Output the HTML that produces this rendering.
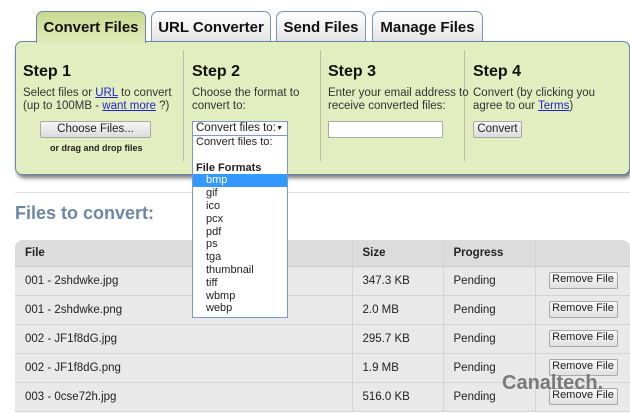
<!DOCTYPE html>
<html><head><style>
*{box-sizing:border-box}
body{margin:0;width:630px;height:413px;overflow:hidden;background:#fff;font-family:"Liberation Sans",Arial,sans-serif;position:relative}
.a{position:absolute}
.tab{position:absolute;top:11px;height:31px;border:1px solid #7a93b8;border-bottom:none;border-radius:7px 7px 0 0;background:linear-gradient(#fff,#e4e4e4);font:bold 15px "Liberation Sans",Arial,sans-serif;text-align:center;line-height:32px;color:#111}
.panel{position:absolute;left:15px;top:41px;width:615px;height:134px;background:#e2eebf;border:1px solid #6c84a8;border-radius:7px;box-shadow:2px 3px 4px #777}
.div{position:absolute;top:50px;width:1px;height:111px;background:#b8bfa4}
h2{position:absolute;margin:0;font:bold 16px "Liberation Sans",Arial,sans-serif;color:#111;top:63px}
.t{position:absolute;font-size:11.5px;line-height:12.5px;color:#333;top:87px}
.t a{color:#2222cc}
.btn{position:absolute;background:linear-gradient(#f6f6f6,#dcdcdc);border:1px solid #a8a8a8;border-radius:2px;font:11.5px "Liberation Sans",Arial,sans-serif;text-align:center;color:#222}
.dd{position:absolute;z-index:5;left:192px;top:135px;width:96px;height:183px;background:#fff;border:1px solid #7a9cc4;font:11px "Liberation Sans",Arial,sans-serif;color:#222}
.dd div{height:12.8px;line-height:12.8px;padding-left:13px}
table{position:absolute;left:15px;top:240px;width:615px;border-collapse:collapse;font-size:11.5px;color:#222}
td{height:29px;border-bottom:1px solid #d4d4d4;padding-left:10px;background:#e9e9e9}
th{height:26px;text-align:left;padding-left:10px;background:#dcdcdc;font-size:11.5px;border-bottom:1px solid #ccc}
td+td,th+th{border-left:1px solid #d4d4d4}
.rb{display:inline-block;width:69px;height:17px;line-height:16px;background:linear-gradient(#fafafa,#e0e0e0);border:1px solid #a8a8a8;border-radius:2px;font:11px "Liberation Sans",Arial,sans-serif;text-align:center;margin-left:3px;vertical-align:middle}
</style></head><body>
<div class="tab" style="left:36px;width:110px;background:linear-gradient(#c9d98e,#e0ebb9);border-color:#6c84a8;height:32px;z-index:2">Convert Files</div>
<div class="tab" style="left:151px;width:120px">URL Converter</div>
<div class="tab" style="left:276px;width:90px">Send Files</div>
<div class="tab" style="left:372px;width:111px">Manage Files</div>
<div class="panel"></div>
<div class="div" style="left:183px"></div><div class="div" style="left:320px"></div><div class="div" style="left:464px"></div>
<h2 style="left:23px">Step 1</h2><h2 style="left:192px">Step 2</h2><h2 style="left:328px">Step 3</h2><h2 style="left:473px">Step 4</h2>
<div class="t" style="left:23px">Select files or <a href="#" style="text-decoration:underline">URL</a> to convert<br>(up to 100MB - <a href="#">want more</a> ?)</div>
<div class="t" style="left:192px">Choose the format to<br>convert to:</div>
<div class="t" style="left:328px">Enter your email address to<br>receive converted files:</div>
<div class="t" style="left:473px">Convert (by clicking you<br>agree to our <a href="#">Terms</a>)</div>
<div class="btn" style="left:40px;top:121px;width:111px;height:17px;line-height:15px">Choose Files...</div>
<div class="a" style="left:50px;top:143px;font:bold 9px 'Liberation Sans',sans-serif;color:#222">or drag and drop files</div>
<div class="a" style="left:192px;top:121px;width:96px;height:15px;background:#fff;border:1px solid #7a9cc4;font:11.5px 'Liberation Sans',Arial,sans-serif;line-height:13px;padding-left:3px;color:#222">Convert files to: <span style="position:absolute;right:4px;font-size:7px">▼</span></div>
<div class="dd"><div style="padding-left:3px">Convert files to:</div><div></div><div style="padding-left:3px;font-weight:bold">File Formats</div><div style="background:#3399ff;color:#fff">bmp</div><div>gif</div><div>ico</div><div>pcx</div><div>pdf</div><div>ps</div><div>tga</div><div>thumbnail</div><div>tiff</div><div>wbmp</div><div>webp</div></div>
<div class="a" style="left:328px;top:121px;width:115px;height:17px;background:#fff;border:1px solid #aaa"></div>
<div class="btn" style="left:473px;top:121px;width:49px;height:17px;line-height:15px">Convert</div>
<div class="a" style="left:15px;top:192px;width:615px;height:1px;background:#ddd"></div>
<div class="a" style="left:15px;top:203px;font:bold 18px 'Liberation Sans',sans-serif;color:#6c86a6">Files to convert:</div>
<table>
<tr><th style="width:337px;border-top-left-radius:8px">File</th><th style="width:91px">Size</th><th style="width:92px">Progress</th><th style="border-top-right-radius:8px"></th></tr>
<tr><td>001 - 2shdwke.jpg</td><td>347.3 KB</td><td>Pending</td><td><span class="rb">Remove File</span></td></tr>
<tr><td>001 - 2shdwke.png</td><td>2.0 MB</td><td>Pending</td><td><span class="rb">Remove File</span></td></tr>
<tr><td>002 - JF1f8dG.jpg</td><td>295.7 KB</td><td>Pending</td><td><span class="rb">Remove File</span></td></tr>
<tr><td>002 - JF1f8dG.png</td><td>1.9 MB</td><td>Pending</td><td><span class="rb">Remove File</span></td></tr>
<tr><td>003 - 0cse72h.jpg</td><td>516.0 KB</td><td>Pending</td><td><span class="rb">Remove File</span></td></tr>
</table>
<div class="a" style="left:502px;top:372px;font:bold 20px 'Liberation Sans',sans-serif;color:#6e6e6e;opacity:.9">Canaltech.</div>
</body></html>
